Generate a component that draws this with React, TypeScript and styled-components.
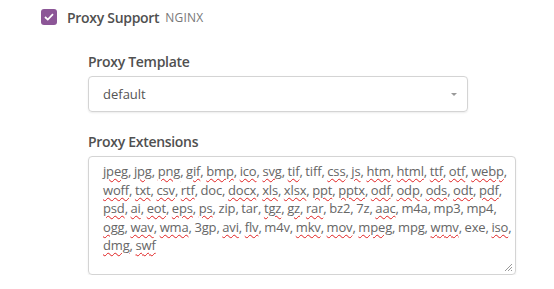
import styled, { createGlobalStyle } from "styled-components";

const GlobalStyle = createGlobalStyle`
    body {
        margin: 0;
        background: #fff;
        font-family: "Open Sans", "Liberation Sans", sans-serif;
    }
`;

const Page = styled.div`
    padding: 9px 0 0 41px;
`;

const CheckRow = styled.label`
    display: flex;
    align-items: center;
    gap: 10px;
    height: 16px;
`;

const Check = styled.span`
    width: 16px;
    height: 16px;
    border-radius: 3px;
    background: #8c5697;
    display: flex;
    align-items: center;
    justify-content: center;
`;

const CheckTitle = styled.span`
    font-size: 14px;
    font-weight: 600;
    color: #505050;
    letter-spacing: -0.3px;
`;

const Tag = styled.span`
    font-size: 12px;
    color: #777;
    margin-left: -4px;
    letter-spacing: 0.2px;
`;

const Fields = styled.div`
    margin-left: 47px;
    padding-top: 27px;
    display: flex;
    flex-direction: column;
`;

const Label = styled.div`
    font-size: 14px;
    font-weight: 600;
    color: #505050;
    letter-spacing: -0.3px;
    height: 19px;
    margin-bottom: 5px;
`;

const Select = styled.div`
    width: 380px;
    height: 36px;
    box-sizing: border-box;
    border: 1px solid #d4d4d4;
    border-radius: 4px;
    box-shadow: 0 1px 2px rgba(0, 0, 0, 0.08);
    display: flex;
    align-items: center;
    justify-content: space-between;
    padding: 0 10px 0 14px;
    font-size: 13px;
    color: #555;
    margin-bottom: 20px;
`;

const Caret = styled.span`
    width: 0;
    height: 0;
    border-left: 3px solid transparent;
    border-right: 3px solid transparent;
    border-top: 3px solid #999;
`;

const Area = styled.div`
    width: 428px;
    height: 119px;
    box-sizing: border-box;
    border: 1px solid #d4d4d4;
    border-radius: 4px;
    box-shadow: 0 1px 2px rgba(0, 0, 0, 0.08);
    padding: 5px 0 0 14px;
    font-size: 13px;
    line-height: 18.5px;
    color: #666;
    letter-spacing: -0.16px;
    word-spacing: -0.5px;
    position: relative;
`;

const Word = styled.span<{ bad: boolean }>`
    text-decoration: ${(p) => (p.bad ? "underline wavy #e02020" : "none")};
    text-decoration-thickness: 1px;
    text-underline-offset: 2px;
`;

const Grip = styled.svg`
    position: absolute;
    right: 2px;
    bottom: 2px;
`;

const ok = ["tiff", "doc", "zip", "tar", "bz2", "7z", "m4a", "mp3", "mp4", "3gp", "m4v", "mpg", "exe"];

const exts =
    "jpeg jpg png gif bmp ico svg tif tiff css js htm html ttf otf webp woff txt csv rtf doc docx xls xlsx ppt pptx odf odp ods odt pdf psd ai eot eps ps zip tar tgz gz rar bz2 7z aac m4a mp3 mp4 ogg wav wma 3gp avi flv m4v mkv mov mpeg mpg wmv exe iso dmg swf".split(
        " "
    );

export default function App() {
    return (
        <>
            <GlobalStyle />
            <Page>
                <CheckRow>
                    <Check>
                        <svg width="10" height="8" viewBox="0 0 10 8">
                            <path d="M1 4 L3.8 6.6 L9 1.2" fill="none" stroke="#fff" strokeWidth="1.8" />
                        </svg>
                    </Check>
                    <CheckTitle>Proxy Support</CheckTitle>
                    <Tag>NGINX</Tag>
                </CheckRow>
                <Fields>
                    <Label>Proxy Template</Label>
                    <Select>
                        default
                        <Caret />
                    </Select>
                    <Label>Proxy Extensions</Label>
                    <Area>
                        {exts.map((e, i) => (
                            <span key={e}>
                                <Word bad={!ok.includes(e)}>{e}</Word>
                                {i < exts.length - 1 ? ", " : ""}
                            </span>
                        ))}
                        <Grip width="9" height="9" viewBox="0 0 9 9">
                            <path d="M8 1 L1 8 M8 4 L4 8 M8 7 L7 8" stroke="#999" strokeWidth="1" />
                        </Grip>
                    </Area>
                </Fields>
            </Page>
        </>
    );
}
